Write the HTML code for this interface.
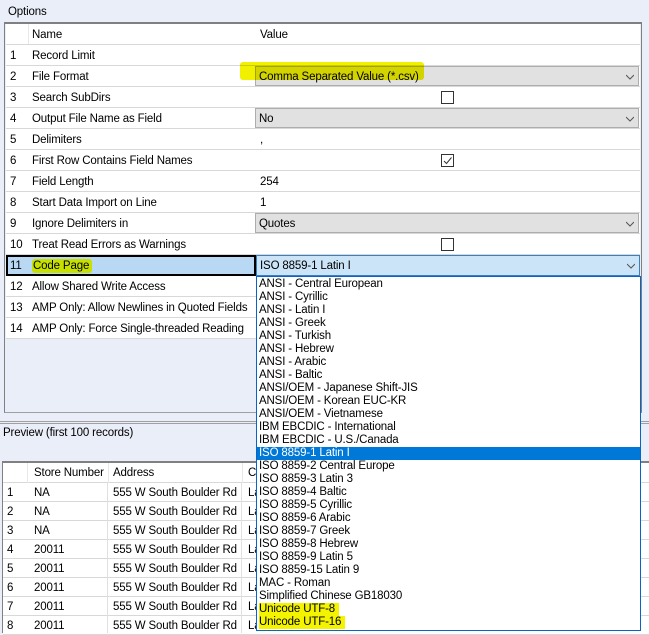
<!DOCTYPE html>
<html><head><meta charset="utf-8"><style>
*{margin:0;padding:0;box-sizing:border-box}
body{width:649px;height:633px;background:#eaeef8;font-family:"Liberation Sans",sans-serif;font-size:11.5px;letter-spacing:-0.15px;color:#000;position:relative;overflow:hidden}
.a{position:absolute;white-space:nowrap}
.row{position:absolute;left:6px;width:634px;height:21px;border-bottom:1px solid #d8d8d8;background:#fff}
.row span{position:absolute;top:5px;white-space:nowrap}
.dd{position:absolute;left:249px;width:384px;height:20px;top:0;background:#e1e1e1;border:1px solid #adadad}
.dd span{left:3px;top:4px}
.chev{position:absolute;right:4px;top:6px;width:8px;height:8px}
.cb{position:absolute;left:435px;top:4px;width:13px;height:13px;border:1px solid #333;background:#fff}
.list div{height:13px;line-height:13px;padding-left:2px;white-space:nowrap}
.pr{position:absolute;left:3px;width:646px;height:19px;border-bottom:1px solid #d8d8d8;background:#fff}
.pr span{position:absolute;top:4px;white-space:nowrap}
.hl{background:#f4f400}
</style></head><body>
<div class="a" style="left:8px;top:6px">Options</div>
<div class="a" style="left:4px;top:22px;width:638px;height:391px;border:1px solid #808080;border-top:2px solid #808080;border-bottom:1px solid #a0a0a0;background:#eaeef8"></div>
<div class="row" style="top:24px"><span style="left:26px">Name</span><span style="left:254px">Value</span><div class="a" style="left:22px;top:0;width:1px;height:20px;background:#e8e8e8"></div></div>
<div class="row" style="top:45px"><span style="left:4px">1</span><span style="left:26px">Record Limit</span></div>
<div class="row" style="top:66px"><span style="left:4px">2</span><span style="left:26px">File Format</span><div class="dd"><span class="a">Comma Separated Value (*.csv)</span><svg class="chev" viewBox="0 0 8 8"><path d="M0 2 L4 6 L8 2" fill="none" stroke="#555"/></svg></div></div>
<div class="a" style="left:240px;top:62px;width:184px;height:18px;background:#f0f000;mix-blend-mode:multiply;border-radius:3px"></div>
<div class="row" style="top:87px"><span style="left:4px">3</span><span style="left:26px">Search SubDirs</span><div class="cb"></div></div>
<div class="row" style="top:108px"><span style="left:4px">4</span><span style="left:26px">Output File Name as Field</span><div class="dd"><span class="a">No</span><svg class="chev" viewBox="0 0 8 8"><path d="M0 2 L4 6 L8 2" fill="none" stroke="#555"/></svg></div></div>
<div class="row" style="top:129px"><span style="left:4px">5</span><span style="left:26px">Delimiters</span><span style="left:254px">,</span></div>
<div class="row" style="top:150px"><span style="left:4px">6</span><span style="left:26px">First Row Contains Field Names</span><div class="cb"><svg width="11" height="11" viewBox="0 0 11 11"><path d="M2 6 L4.5 8.5 L9.5 2.5" fill="none" stroke="#333"/></svg></div></div>
<div class="row" style="top:171px"><span style="left:4px">7</span><span style="left:26px">Field Length</span><span style="left:254px">254</span></div>
<div class="row" style="top:192px"><span style="left:4px">8</span><span style="left:26px">Start Data Import on Line</span><span style="left:254px">1</span></div>
<div class="row" style="top:213px"><span style="left:4px">9</span><span style="left:26px">Ignore Delimiters in</span><div class="dd"><span class="a">Quotes</span><svg class="chev" viewBox="0 0 8 8"><path d="M0 2 L4 6 L8 2" fill="none" stroke="#555"/></svg></div></div>
<div class="row" style="top:234px"><span style="left:4px">10</span><span style="left:26px">Treat Read Errors as Warnings</span><div class="cb"></div></div>
<div class="row" style="top:255px;background:#b9d8f4;border:2px solid #000;width:250px;height:21px"><span style="left:2px;top:3px">11</span><span class="a" style="left:24px;top:2px;background:#c8e000;padding:1px 3px 1px 1px;border-radius:3px">Code Page</span></div>
<div class="a" style="left:256px;top:255px;width:384px;height:21px;background:#cce4f7;border:1px solid #3c7fc0"><span class="a" style="left:3px;top:4px">ISO 8859-1 Latin I</span><svg class="chev" viewBox="0 0 8 8"><path d="M0 2 L4 6 L8 2" fill="none" stroke="#555"/></svg></div>
<div class="row" style="top:276px"><span style="left:4px">12</span><span style="left:26px">Allow Shared Write Access</span></div>
<div class="row" style="top:297px"><span style="left:4px">13</span><span style="left:26px">AMP Only: Allow Newlines in Quoted Fields</span></div>
<div class="row" style="top:318px"><span style="left:4px">14</span><span style="left:26px">AMP Only: Force Single-threaded Reading</span></div>
<div class="a" style="left:0;top:421px;width:649px;height:3px;border-top:1px solid #a0a0a0;border-bottom:1px solid #a0a0a0"></div>
<div class="a" style="left:3px;top:427px">Preview (first 100 records)</div>
<div class="a" style="left:2px;top:461px;width:647px;height:172px;border:1px solid #808080;border-top:2px solid #808080;background:#fff"></div>
<div class="pr" style="top:463px;height:20px"><span style="left:31px">Store Number</span><span style="left:110px">Address</span><span style="left:245px">City</span><div class="a" style="left:24px;top:0;width:1px;height:20px;background:#e8e8e8"></div><div class="a" style="left:105px;top:0;width:1px;height:20px;background:#e8e8e8"></div><div class="a" style="left:239px;top:0;width:1px;height:20px;background:#e8e8e8"></div></div>
<div class="pr" style="top:483px"><span style="left:4px">1</span><span style="left:31px">NA</span><span style="left:110px">555 W South Boulder Rd</span><span style="left:245px">La</span></div>
<div class="pr" style="top:502px"><span style="left:4px">2</span><span style="left:31px">NA</span><span style="left:110px">555 W South Boulder Rd</span><span style="left:245px">La</span></div>
<div class="pr" style="top:521px"><span style="left:4px">3</span><span style="left:31px">NA</span><span style="left:110px">555 W South Boulder Rd</span><span style="left:245px">La</span></div>
<div class="pr" style="top:540px"><span style="left:4px">4</span><span style="left:31px">20011</span><span style="left:110px">555 W South Boulder Rd</span><span style="left:245px">La</span></div>
<div class="pr" style="top:559px"><span style="left:4px">5</span><span style="left:31px">20011</span><span style="left:110px">555 W South Boulder Rd</span><span style="left:245px">La</span></div>
<div class="pr" style="top:578px"><span style="left:4px">6</span><span style="left:31px">20011</span><span style="left:110px">555 W South Boulder Rd</span><span style="left:245px">La</span></div>
<div class="pr" style="top:597px"><span style="left:4px">7</span><span style="left:31px">20011</span><span style="left:110px">555 W South Boulder Rd</span><span style="left:245px">La</span></div>
<div class="pr" style="top:616px"><span style="left:4px">8</span><span style="left:31px">20011</span><span style="left:110px">555 W South Boulder Rd</span><span style="left:245px">La</span></div>
<div class="a" style="left:107px;top:483px;width:1px;height:150px;background:#e0e0e0"></div>
<div class="a" style="left:241px;top:483px;width:1px;height:150px;background:#e0e0e0"></div>
<div class="a list" style="left:256px;top:276px;width:385px;height:355px;background:#fff;border:1px solid #0a64c8;padding-top:1px">
<div>ANSI - Central European</div><div>ANSI - Cyrillic</div><div>ANSI - Latin I</div><div>ANSI - Greek</div><div>ANSI - Turkish</div><div>ANSI - Hebrew</div><div>ANSI - Arabic</div><div>ANSI - Baltic</div><div>ANSI/OEM - Japanese Shift-JIS</div><div>ANSI/OEM - Korean EUC-KR</div><div>ANSI/OEM - Vietnamese</div><div>IBM EBCDIC - International</div><div>IBM EBCDIC - U.S./Canada</div><div style="background:#0078d7;color:#fff">ISO 8859-1 Latin I</div><div>ISO 8859-2 Central Europe</div><div>ISO 8859-3 Latin 3</div><div>ISO 8859-4 Baltic</div><div>ISO 8859-5 Cyrillic</div><div>ISO 8859-6 Arabic</div><div>ISO 8859-7 Greek</div><div>ISO 8859-8 Hebrew</div><div>ISO 8859-9 Latin 5</div><div>ISO 8859-15 Latin 9</div><div>MAC - Roman</div><div>Simplified Chinese GB18030</div><div><span class="hl" style="padding:0 4px 1px 0">Unicode UTF-8</span></div><div><span class="hl" style="padding:0 4px 1px 0">Unicode UTF-16</span></div>
</div>
</body></html>
